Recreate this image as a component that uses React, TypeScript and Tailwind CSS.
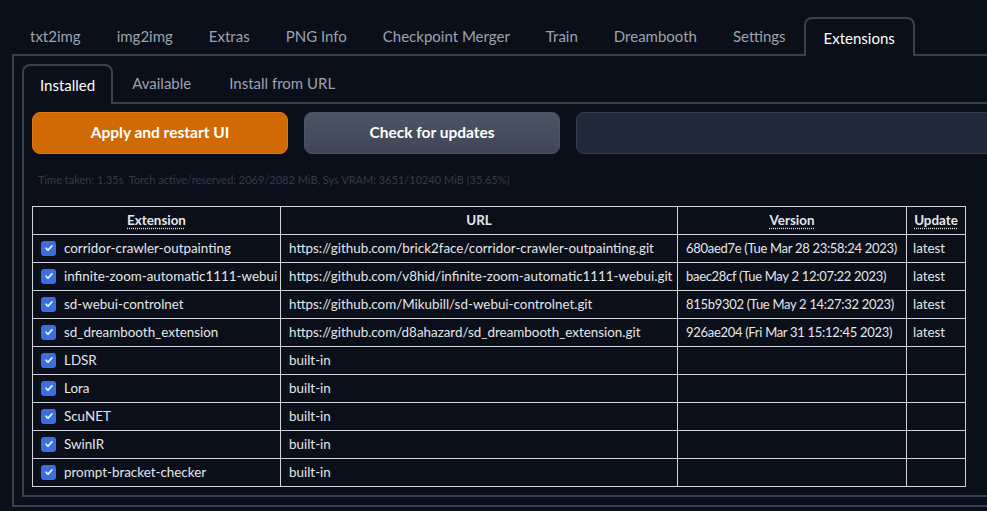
import React from "react";

const topTabs = [
  "txt2img",
  "img2img",
  "Extras",
  "PNG Info",
  "Checkpoint Merger",
  "Train",
  "Dreambooth",
  "Settings",
  "Extensions",
];

const innerTabs = ["Installed", "Available", "Install from URL"];

const rows = [
  {
    name: "corridor-crawler-outpainting",
    url: "https://github.com/brick2face/corridor-crawler-outpainting.git",
    version: "680aed7e (Tue Mar 28 23:58:24 2023)",
    update: "latest",
  },
  {
    name: "infinite-zoom-automatic1111-webui",
    url: "https://github.com/v8hid/infinite-zoom-automatic1111-webui.git",
    version: "baec28cf (Tue May 2 12:07:22 2023)",
    update: "latest",
  },
  {
    name: "sd-webui-controlnet",
    url: "https://github.com/Mikubill/sd-webui-controlnet.git",
    version: "815b9302 (Tue May 2 14:27:32 2023)",
    update: "latest",
  },
  {
    name: "sd_dreambooth_extension",
    url: "https://github.com/d8ahazard/sd_dreambooth_extension.git",
    version: "926ae204 (Fri Mar 31 15:12:45 2023)",
    update: "latest",
  },
  { name: "LDSR", url: "built-in", version: "", update: "" },
  { name: "Lora", url: "built-in", version: "", update: "" },
  { name: "ScuNET", url: "built-in", version: "", update: "" },
  { name: "SwinIR", url: "built-in", version: "", update: "" },
  { name: "prompt-bracket-checker", url: "built-in", version: "", update: "" },
];

function Check() {
  return (
    <span className="w-[15px] h-[15px] rounded-[3px] bg-[#3b6fe0] flex items-center justify-center shrink-0">
      <svg width="10" height="10" viewBox="0 0 10 10" fill="none">
        <path d="M2 5.2l2 2 4-4.4" stroke="white" strokeWidth="1.6" strokeLinecap="round" strokeLinejoin="round" />
      </svg>
    </span>
  );
}

export default function App() {
  return (
    <div
      className="w-[987px] h-[511px] overflow-hidden bg-[#0b0f19] text-[#e5e7eb]"
      style={{ fontFamily: "Lato, 'Liberation Sans', sans-serif" }}
    >
      <div className="w-[1200px] pl-[12px] pt-[17px]">
        {/* top tabs */}
        <div className="flex border-b-2 border-[#374151]">
          {topTabs.map((t) => (
            <div
              key={t}
              className={
                t === "Extensions"
                  ? "h-[39px] px-[18px] pt-[2px] flex items-center text-[15px] text-white border-2 border-b-0 border-[#374151] rounded-t-lg -mb-[2px] bg-[#0b0f19]"
                  : "h-[37px] px-[18px] pt-[2px] flex items-center text-[15px] text-[#9ca3af]"
              }
            >
              {t}
            </div>
          ))}
        </div>

        {/* outer panel */}
        <div className="border-2 border-t-0 border-[#374151] px-2 pt-2 pb-2">
          {/* inner tabs */}
          <div className="flex border-b-2 border-[#374151]">
            {innerTabs.map((t) => (
              <div
                key={t}
                className={
                  t === "Installed"
                    ? "h-[40px] px-[16px] flex items-center text-[15px] text-white border-2 border-b-0 border-[#374151] rounded-t-lg -mb-[2px] bg-[#0b0f19]"
                    : "h-[38px] px-[19px] flex items-center text-[15px] text-[#9ca3af]"
                }
              >
                {t}
              </div>
            ))}
          </div>

          {/* inner panel */}
          <div className="border-2 border-t-0 border-[#374151] px-2 pt-2 pb-2">
            <div className="flex gap-4">
              <button className="w-[256px] h-[42px] rounded-lg bg-[#d06a04] border border-[#e07a12] text-white font-bold text-[15.5px]">
                Apply and restart UI
              </button>
              <button className="w-[256px] h-[42px] rounded-lg bg-gradient-to-b from-[#4b5563] to-[#3f4756] border border-[#4b5563] text-white font-bold text-[15.5px]">
                Check for updates
              </button>
              <div className="w-[600px] h-[42px] rounded-lg bg-[#1f2937] border border-[#374151]" />
            </div>

            <div className="mt-[19px] pl-[6px] text-[11px] leading-[14px] text-[#343b48]">
              Time taken: 1.35s&nbsp; Torch active/reserved: 2069/2082 MiB, Sys VRAM: 3651/10240 MiB (35.65%)
            </div>

            <table className="mt-[19px] table-fixed border-collapse text-[13.4px] w-[933px]">
              <colgroup>
                <col className="w-[248px]" />
                <col className="w-[397px]" />
                <col className="w-[229px]" />
                <col className="w-[59px]" />
              </colgroup>
              <thead>
                <tr className="h-[28px]">
                  <th className="border border-[#d1d5db] font-bold text-center">
                    <abbr className="underline decoration-dotted underline-offset-2">Extension</abbr>
                  </th>
                  <th className="border border-[#d1d5db] font-bold text-center">URL</th>
                  <th className="border border-[#d1d5db] font-bold text-center">
                    <abbr className="underline decoration-dotted underline-offset-2">Version</abbr>
                  </th>
                  <th className="border border-[#d1d5db] font-bold text-center">
                    <abbr className="underline decoration-dotted underline-offset-2">Update</abbr>
                  </th>
                </tr>
              </thead>
              <tbody>
                {rows.map((r) => (
                  <tr key={r.name} className="h-[28px]">
                    <td className="border border-[#d1d5db] px-[8px] whitespace-nowrap">
                      <div className="flex items-center gap-[8px]">
                        <Check />
                        <span>{r.name}</span>
                      </div>
                    </td>
                    <td className="border border-[#d1d5db] px-[8px] whitespace-nowrap">{r.url}</td>
                    <td className="border border-[#d1d5db] px-[8px] whitespace-nowrap text-[13px] tracking-[-0.3px]">
                      {r.version}
                    </td>
                    <td className="border border-[#d1d5db] px-[6px] whitespace-nowrap">{r.update}</td>
                  </tr>
                ))}
              </tbody>
            </table>
          </div>
        </div>
      </div>
    </div>
  );
}
